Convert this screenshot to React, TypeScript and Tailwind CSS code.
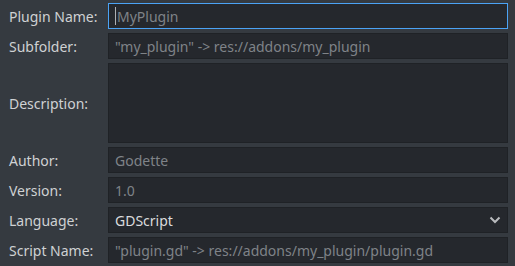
import React from "react";

const font = { fontFamily: '"Noto Sans", "Open Sans", sans-serif' };

function Field({ children, focus, dim, h = "h-[26px]" }: { children?: React.ReactNode; focus?: boolean; dim?: boolean; h?: string }) {
  return (
    <div
      className={`${h} flex items-center border px-[6px] text-[14px] ${
        focus ? "border-[#4ba3f5] bg-[#25282d]" : "border-[#1f2226] bg-[#25282d]"
      } ${dim ? "text-[#7f8388]" : "text-[#dadbdd]"}`}
    >
      {children}
    </div>
  );
}

function Label({ children }: { children: React.ReactNode }) {
  return <div className="flex items-center text-[14px] text-[#cfd1d3]">{children}</div>;
}

export default function App() {
  return (
    <div className="w-[515px] h-[266px] bg-[#353a40] overflow-hidden" style={font}>
      <div className="grid grid-cols-[99px_400px] gap-y-[4px] pl-[9px] pt-[3px]">
        <Label>Plugin Name:</Label>
        <Field focus dim>
          <span className="inline-block w-px h-[18px] bg-[#aeb0b3] mr-[1px]" />
          MyPlugin
        </Field>
        <Label>Subfolder:</Label>
        <Field dim>"my_plugin" -&gt; res://addons/my_plugin</Field>
        <Label>Description:</Label>
        <Field h="h-[80px]" />
        <Label>Author:</Label>
        <Field dim>Godette</Field>
        <Label>Version:</Label>
        <Field dim>1.0</Field>
        <Label>Language:</Label>
        <Field>
          <span className="flex-1">GDScript</span>
          <svg width="12" height="8" viewBox="0 0 12 8" className="mr-[0px]">
            <path d="M1.5 1.5 L6 6 L10.5 1.5" fill="none" stroke="#b9bbbe" strokeWidth="2" />
          </svg>
        </Field>
        <Label>Script Name:</Label>
        <Field dim>"plugin.gd" -&gt; res://addons/my_plugin/plugin.gd</Field>
      </div>
    </div>
  );
}
